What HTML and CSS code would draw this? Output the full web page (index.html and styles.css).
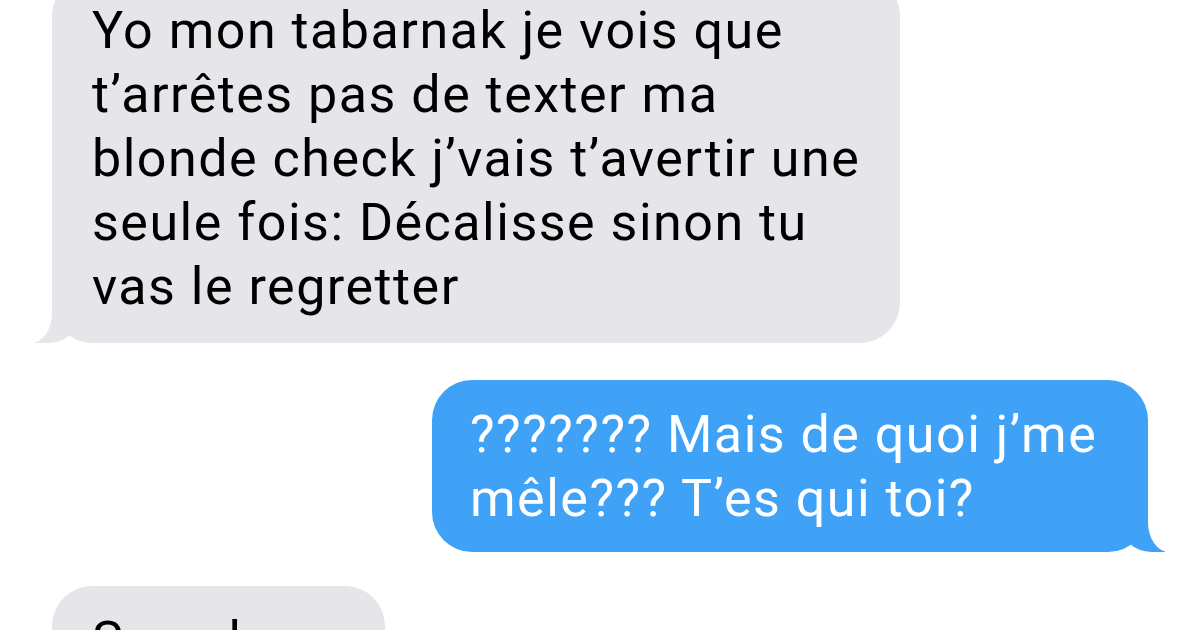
FILE: index.html
```html
<!DOCTYPE html>
<html>
<head>
    <title>Messages</title>
    <link rel="stylesheet" href="styles.css">
</head>
<body>
    <div class="thread">
        <div class="bubble them first">
            Yo mon tabarnak je vois que<br>
            t’arrêtes pas de texter ma<br>
            blonde check j’vais t’avertir une<br>
            seule fois: Décalisse sinon tu<br>
            vas le regretter
        </div>

        <div class="bubble me">
            ??????? Mais de quoi j’me<br>
            mêle??? T’es qui toi?
        </div>

        <div class="bubble them last">
            Son chum
        </div>
    </div>
</body>
</html>
```

FILE: styles.css
```css
body {
    margin: 0;
    background: #fff;
    font-family: Roboto, "Liberation Sans", Arial, sans-serif;
    overflow: hidden;
}

.thread {
    display: flex;
    flex-direction: column;
    padding: 0 52px;
    margin-top: -24px;
}

.bubble {
    position: relative;
    box-sizing: border-box;
    font-size: 52px;
    letter-spacing: 1.5px;
    line-height: 64px;
    padding: 23px 40px 24px;
    border-radius: 40px;
    white-space: nowrap;
}

.bubble.them {
    align-self: flex-start;
    background: #e5e5ea;
    color: #000;
}

.bubble.first {
    width: 848px;
}

.bubble.last {
    width: 333px;
    margin-top: 34px;
}

.bubble.me {
    align-self: flex-end;
    width: 716px;
    margin-top: 37px;
    padding: 23px 38px 21px;
    background: #3fa2f7;
    color: #fff;
}

/* tails */
.bubble.them::before,
.bubble.me::before {
    content: "";
    position: absolute;
    bottom: 0;
    width: 44px;
    height: 40px;
}

.bubble.them::after,
.bubble.me::after {
    content: "";
    position: absolute;
    bottom: 0;
    width: 40px;
    height: 40px;
    background: #fff;
}

.bubble.them::before {
    left: -17px;
    background: #e5e5ea;
    border-bottom-right-radius: 30px 28px;
}

.bubble.them::after {
    left: -40px;
    border-bottom-right-radius: 21px 30px;
}

.bubble.me::before {
    right: -17px;
    background: #3fa2f7;
    border-bottom-left-radius: 30px 28px;
}

.bubble.me::after {
    right: -40px;
    border-bottom-left-radius: 21px 30px;
}
```
